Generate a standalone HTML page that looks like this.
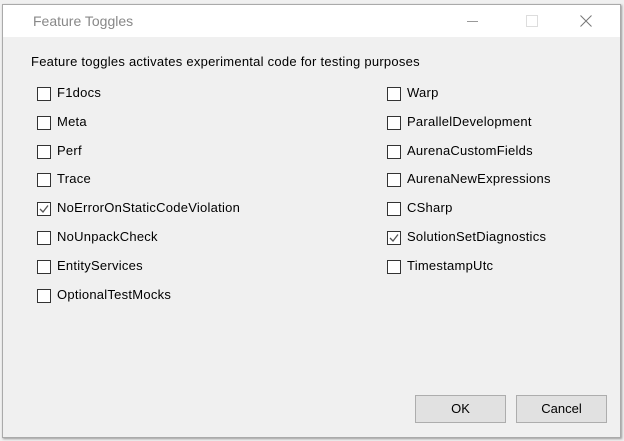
<!DOCTYPE html>
<html><head><style>
body{margin:0;width:624px;height:441px;background:#f0f0f0;position:relative;overflow:hidden;font-family:"Liberation Sans",sans-serif;font-size:13px;color:#000}
.win{position:absolute;left:2px;top:4px;width:617px;height:432px;background:#f0f0f0;border:1px solid #aaa;box-shadow:1px 1px 2px #999}
.title{position:absolute;left:0;top:0;width:617px;height:32px;background:#fff}
.title span{position:absolute;left:30px;top:8px;font-size:14px;color:#888}
.cb{position:absolute;width:12px;height:12px;border:1px solid #333;background:#fff}
.lb{position:absolute;font-size:13px;letter-spacing:0.25px}
.btn{position:absolute;top:391px;height:26px;width:89px;background:#e1e1e1;border:1px solid #adadad;text-align:center;line-height:26px;font-size:13px}
</style></head><body>
<div class="win">
<div class="title"><span>Feature Toggles</span>
<div style="position:absolute;left:464px;top:16px;width:11px;height:1px;background:#999"></div>
<div style="position:absolute;left:523px;top:10px;width:10px;height:10px;border:1px solid #ddd"></div>
<svg style="position:absolute;left:577px;top:10px" width="12" height="12"><path d="M0.5 0.5L11.5 11.5M11.5 0.5L0.5 11.5" stroke="#777" stroke-width="1"/></svg>
</div>
<div class="lb" style="left:28px;top:49px">Feature toggles activates experimental code for testing purposes</div>
</div>
<div id="c"></div>
<script>
var L=["F1docs","Meta","Perf","Trace","NoErrorOnStaticCodeViolation","NoUnpackCheck","EntityServices","OptionalTestMocks"];
var R=["Warp","ParallelDevelopment","AurenaCustomFields","AurenaNewExpressions","CSharp","SolutionSetDiagnostics","TimestampUtc"];
var h="";
function add(arr,x,chk){arr.forEach(function(t,i){var y=87+i*28.8;
h+='<div class="cb" style="left:'+x+'px;top:'+y+'px">'+(chk==i?'<svg width="12" height="12" style="position:absolute;left:0;top:0"><path d="M2 6L5 9L10 2.5" fill="none" stroke="#555" stroke-width="1.3"/></svg>':'')+'</div>';
h+='<div class="lb" style="left:'+(x+20)+'px;top:'+(y-2)+'px">'+t+'</div>';});}
add(L,37,4);add(R,387,5);
h+='<div class="btn" style="left:415px;top:395px">OK</div><div class="btn" style="left:516px;top:395px">Cancel</div>';
document.getElementById("c").innerHTML=h;
</script>
</body></html>
